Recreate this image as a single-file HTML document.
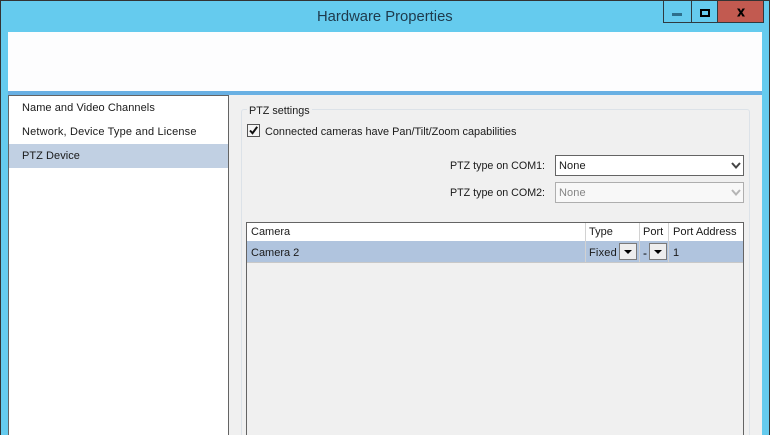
<!DOCTYPE html>
<html style="height:435px;overflow:hidden"><head><meta charset="utf-8">
<style>
html,body{margin:0;padding:0}
body{width:770px;height:435px;overflow:hidden;position:relative;background:#65cbee;font-family:"Liberation Sans",sans-serif;font-size:11px;color:#1a1a1a}
div,svg{position:absolute;box-sizing:border-box}
.t{white-space:nowrap;line-height:16px}
#w{left:0;top:0;width:770px;height:435px;overflow:hidden}
</style></head><body><div id="w">
<!-- window frame -->
<div style="left:0;top:0;width:770px;height:1px;background:#333"></div>
<div style="left:0;top:0;width:1px;height:435px;background:#333"></div>
<div style="left:769px;top:0;width:1px;height:435px;background:#333"></div>
<div class="t" style="left:317px;top:8px;font-size:14.8px;line-height:18px;color:#1e3a4c">Hardware Properties</div>
<!-- caption buttons -->
<div style="left:663px;top:1px;width:101px;height:22px;border:1px solid #2f3a40;border-top:none"></div>
<div style="left:691px;top:1px;width:1px;height:22px;background:#2f3a40"></div>
<div style="left:717px;top:1px;width:47px;height:22px;background:#c25a50;border:1px solid #2f3a40;border-top:none"></div>
<div style="left:672px;top:13px;width:10px;height:3px;background:#2d6f8c"></div>
<div style="left:700px;top:9px;width:10px;height:8px;border:2px solid #000"></div>
<svg style="left:736px;top:8px" width="10" height="9" viewBox="0 0 10 9"><path d="M1 0.5H3.5L5 3L6.5 0.5H9L6.3 4.5L9 8.5H6.5L5 6L3.5 8.5H1L3.7 4.5Z" fill="#000"/></svg>
<!-- header -->
<div style="left:8px;top:32px;width:754px;height:59px;background:#fdfdfe"></div>
<div style="left:8px;top:91px;width:754px;height:4px;background:#69b0e3"></div>
<!-- client -->
<div style="left:8px;top:95px;width:754px;height:340px;background:#f0f0f0"></div>
<!-- list -->
<div style="left:8px;top:95px;width:221px;height:340px;background:#fff;border:1px solid #646464;border-bottom:none"></div>
<div style="left:9px;top:144px;width:219px;height:24px;background:#c1d0e3"></div>
<div class="t" style="left:22px;top:100px;font-size:11px;letter-spacing:.07px">Name and Video Channels</div>
<div class="t" style="left:22px;top:124px;font-size:11px;letter-spacing:.17px">Network, Device Type and License</div>
<div class="t" style="left:22px;top:148px;font-size:11px;letter-spacing:.05px">PTZ Device</div>
<!-- group -->
<div style="left:241px;top:109px;width:509px;height:340px;border:1px solid #dce2e8;border-radius:3px"></div>
<div class="t" style="left:247px;top:103px;padding:0 2px;background:#f0f0f0;font-size:10.8px">PTZ settings</div>
<!-- checkbox -->
<div style="left:247px;top:124px;width:13px;height:13px;background:#f4f4f4;border:1px solid #555"></div>
<svg style="left:248px;top:125px" width="11" height="11" viewBox="0 0 11 11"><path d="M2 5.5L4.5 8.2L9.2 1.8" fill="none" stroke="#111" stroke-width="2"/></svg>
<div class="t" style="left:265px;top:124px;font-size:10.9px">Connected cameras have Pan/Tilt/Zoom capabilities</div>
<!-- selects -->
<div class="t" style="left:450px;top:158px;font-size:10.7px">PTZ type on COM1:</div>
<div class="t" style="left:450px;top:185px;font-size:10.7px">PTZ type on COM2:</div>
<div style="left:555px;top:155px;width:189px;height:21px;background:#fff;border:1px solid #646464"></div>
<div class="t" style="left:559px;top:158px;font-size:11px;letter-spacing:.1px">None</div>
<svg style="left:731px;top:161px" width="10" height="9" viewBox="0 0 10 9"><path d="M1 2L5 6.5L9 2" fill="none" stroke="#444" stroke-width="2"/></svg>
<div style="left:555px;top:182px;width:189px;height:21px;background:#f8f8f8;border:1px solid #aeaeae"></div>
<div class="t" style="left:559px;top:185px;font-size:11px;letter-spacing:.1px;color:#858585">None</div>
<svg style="left:731px;top:188px" width="10" height="9" viewBox="0 0 10 9"><path d="M1 2L5 6.5L9 2" fill="none" stroke="#b5b5b5" stroke-width="2"/></svg>
<!-- grid -->
<div style="left:246px;top:222px;width:498px;height:213px;background:#f0f0f0;border:1px solid #646464;border-bottom:none"></div>
<div style="left:247px;top:223px;width:496px;height:18px;background:#fff"></div>
<div style="left:247px;top:241px;width:496px;height:21px;background:#b0c4de"></div>
<div style="left:247px;top:262px;width:496px;height:1px;background:#c8c8c8"></div>
<div style="left:585px;top:223px;width:1px;height:39px;background:#d2d2d2"></div>
<div style="left:639px;top:223px;width:1px;height:39px;background:#d2d2d2"></div>
<div style="left:668px;top:223px;width:1px;height:39px;background:#d2d2d2"></div>
<div class="t" style="left:251px;top:224px;font-size:11px">Camera</div>
<div class="t" style="left:589px;top:224px;font-size:11px">Type</div>
<div class="t" style="left:643px;top:224px;font-size:11px">Port</div>
<div class="t" style="left:673px;top:224px;font-size:11.1px">Port Address</div>
<div class="t" style="left:251px;top:245px;font-size:11px">Camera 2</div>
<div class="t" style="left:589px;top:245px;font-size:11px;letter-spacing:.2px">Fixed</div>
<div class="t" style="left:643px;top:245px;font-size:12px;color:#000">-</div>
<div class="t" style="left:673px;top:245px;font-size:11px">1</div>
<div style="left:619px;top:243px;width:18px;height:17px;background:#eee;border:1px solid #7a7a7a"></div>
<div style="left:624px;top:250px;width:0;height:0;border-left:4px solid transparent;border-right:4px solid transparent;border-top:4px solid #000"></div>
<div style="left:649px;top:243px;width:18px;height:17px;background:#eee;border:1px solid #7a7a7a"></div>
<div style="left:654px;top:250px;width:0;height:0;border-left:4px solid transparent;border-right:4px solid transparent;border-top:4px solid #000"></div>
</div></body></html>
